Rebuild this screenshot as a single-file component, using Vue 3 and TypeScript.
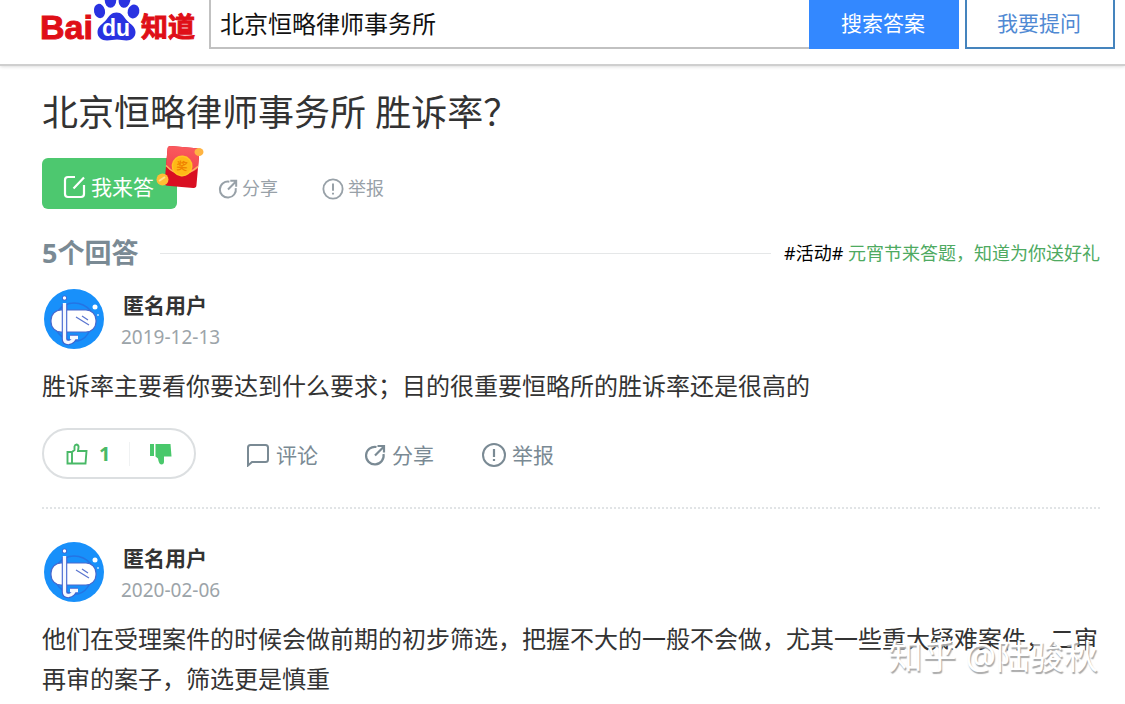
<script setup lang="ts">
import { ref } from 'vue'

interface Answer {
  id: number
  user: string
  date: string
  text: string
  likes?: number
}

const query = ref('北京恒略律师事务所')

const answers: Answer[] = [
  {
    id: 1,
    user: '匿名用户',
    date: '2019-12-13',
    text: '胜诉率主要看你要达到什么要求；目的很重要恒略所的胜诉率还是很高的',
    likes: 1,
  },
  {
    id: 2,
    user: '匿名用户',
    date: '2020-02-06',
    text: '他们在受理案件的时候会做前期的初步筛选，把握不大的一般不会做，尤其一些重大疑难案件，二审再审的案子，筛选更是慎重',
  },
]
</script>

<template>
  <div class="page">
    <header class="top">
      <a class="logo" href="#" aria-label="Baidu知道">
        <span class="logo-bai">Bai</span>
        <svg class="paw" viewBox="0 0 48 48" width="48" height="48" aria-hidden="true">
          <g fill="#2932e1">
            <ellipse cx="6.500" cy="11" rx="5.500" ry="7.200" transform="rotate(-12 6.500 11)" />
            <ellipse cx="17.500" cy="0" rx="5.800" ry="7.800" />
            <ellipse cx="31.500" cy="0" rx="5.800" ry="7.800" transform="rotate(10 31.500 0)" />
            <ellipse cx="40.500" cy="11.500" rx="5.800" ry="7" transform="rotate(15 40.500 11.500)" />
            <path d="M23.500 12.500c5 0 7 3.500 9.500 7s9.500 6.500 9.500 12.500c0 5.500-4 8.500-9 8.500-3.500 0-6-1-9.500-1s-6.500 1-10 1c-5.500 0-9.500-3-9.500-8.500 0-6 6-8.500 9-12.500 2.500-3.500 5-7 10-7z" />
          </g>
          <text x="23" y="36" text-anchor="middle" class="paw-text">du</text>
        </svg>
        <span class="logo-zhidao">知道</span>
      </a>
      <form class="search" @submit.prevent>
        <input v-model="query" class="search-input" type="text" aria-label="搜索" />
        <button class="search-button" type="submit">搜索答案</button>
        <button class="ask-button" type="button">我要提问</button>
      </form>
    </header>

    <main class="content">
      <h1 class="title">北京恒略律师事务所 胜诉率？</h1>

      <div class="question-actions">
        <button class="answer-button" type="button">
          <svg class="icon" viewBox="0 0 24 24" width="24" height="24" aria-hidden="true">
            <path d="M12 2H5a3 3 0 0 0-3 3v14a3 3 0 0 0 3 3h13a3 3 0 0 0 3-3v-9M10.500 13.500L21 2.500" stroke-width="2.200" />
          </svg>
          <span>我来答</span>
          <svg class="packet" viewBox="0 0 50 48" width="50" height="48" aria-hidden="true">
            <defs>
              <linearGradient id="flap" x1="0" y1="0" x2="0" y2="1">
                <stop offset="0" stop-color="#fa5a5e" />
                <stop offset="1" stop-color="#f2434b" />
              </linearGradient>
            </defs>
            <g transform="rotate(5 27 24)">
              <rect x="11" y="4" width="32" height="40" rx="3" fill="#d90f22" />
              <path d="M11 24V7a3 3 0 0 1 3-3h26a3 3 0 0 1 3 3v17Q27 38 11 24z" fill="url(#flap)" />
              <path d="M11 24Q27 39 43 22" fill="none" stroke="#ffae5e" stroke-width="1.500" />
              <circle cx="27" cy="23" r="10.500" fill="#ffc423" />
              <circle cx="27" cy="23" r="9" fill="#ffb817" />
              <text x="27" y="27" text-anchor="middle" class="packet-text">奖</text>
            </g>
            <circle cx="7.500" cy="36.500" r="6" fill="#ffbd35" />
            <path d="M4 38l6-4" stroke="#ffe08a" stroke-width="2" />
            <ellipse cx="44" cy="9" rx="4.500" ry="4" fill="#ffb442" />
          </svg>
        </button>
        <button class="link-button share" type="button">
          <svg class="icon" viewBox="0 0 22 22" width="20" height="20" aria-hidden="true">
            <path d="M12.500 3A8.800 8.800 0 1 0 19.500 10M11 11.500L20 2.500M13.500 2H20V8.500" stroke-width="2.200" />
          </svg>
          <span>分享</span>
        </button>
        <button class="link-button" type="button">
          <svg class="icon" viewBox="0 0 24 24" width="22" height="22" aria-hidden="true">
            <circle cx="12" cy="12" r="10.500" stroke-width="2" />
            <path d="M12 6v8M12 16v2" stroke-width="2.200" />
          </svg>
          <span>举报</span>
        </button>
      </div>

      <div class="summary">
        <h2 class="count">5个回答</h2>
        <span class="rule"></span>
        <p class="activity">#活动# <a href="#">元宵节来答题，知道为你送好礼</a></p>
      </div>

      <article v-for="answer in answers" :key="answer.id" class="answer">
        <div class="author">
          <svg class="avatar" viewBox="0 0 60 60" width="60" height="60" aria-hidden="true">
            <circle cx="30" cy="30" r="30" fill="#1890fa" />
            <path d="M14 22Q20 14 30 14t17 8M12 40q4 10 17 12h5q8-2 12-11" fill="none" stroke="#2474e4" stroke-width="1.500" />
            <rect x="7" y="21" width="45" height="22" rx="10" fill="#fff" stroke="#4a68cc" stroke-width="1.200" />
            <path d="M32 28l13 8M38 27l6 4" stroke="#5b76d0" stroke-width="1.300" />
            <path d="M20.500 15v35q0 3.500 4 3.500 5-1 6-5.500M26 48.500h8" fill="none" stroke="#3f62cf" stroke-width="5.500" />
            <path d="M20.500 14v36q0 3.500 4 3.500 5-1 6-5.500M26 48.500h8" fill="none" stroke="#f4f8ff" stroke-width="3.300" />
            <circle cx="20.500" cy="9" r="2.500" fill="#3f62cf" />
            <circle cx="20.500" cy="9" r="1.700" fill="#fff" />
            <circle cx="51" cy="18" r="2.500" fill="#fff" />
            <circle cx="54" cy="26" r="1" fill="#c4e1ff" />
          </svg>
          <div class="author-text">
            <h3 class="name">{{ answer.user }}</h3>
            <time class="date" :datetime="answer.date">{{ answer.date }}</time>
          </div>
        </div>
        <p class="text">{{ answer.text }}</p>
        <div v-if="answer.likes" class="answer-actions">
          <div class="votes">
            <button class="vote up" type="button" aria-label="赞同">
              <svg class="icon" viewBox="0 0 22 22" width="22" height="22" aria-hidden="true">
                <path d="M1.500 9h4.500v11.500H1.500zM6 9l2.500-2V3.500Q9 1.500 10.500 1.500q2.500.5 2 3L12 8h8.500l-1 12.500H6z" stroke-width="1.900" />
              </svg>
              <span>{{ answer.likes }}</span>
            </button>
            <button class="vote down" type="button" aria-label="反对">
              <svg viewBox="0 0 22 22" width="22" height="22" fill="#49c86b" aria-hidden="true">
                <path d="M0 1h4v12H0zM5.500 1H20.500l1 12.500H14v5q0 3-2.500 3-2 0-3-3.500l-.5-2.500-2.500-2z" />
              </svg>
            </button>
          </div>
          <button class="link-button large comment" type="button">
            <svg class="icon" viewBox="0 0 24 24" width="24" height="24" aria-hidden="true">
              <path d="M2 22.500V4.500a2.500 2.500 0 0 1 2.500-2.500h15a2.500 2.500 0 0 1 2.500 2.500v12a2.500 2.500 0 0 1-2.500 2.500H6z" stroke-width="2" />
            </svg>
            <span>评论</span>
          </button>
          <button class="link-button large share-answer" type="button">
            <svg class="icon" viewBox="0 0 22 22" width="22" height="22" aria-hidden="true">
              <path d="M12.500 3A8.800 8.800 0 1 0 19.500 10M11 11.500L20 2.500M13.500 2H20V8.500" stroke-width="2.200" />
            </svg>
            <span>分享</span>
          </button>
          <button class="link-button large" type="button">
            <svg class="icon" viewBox="0 0 24 24" width="24" height="24" aria-hidden="true">
              <circle cx="12" cy="12" r="11" stroke-width="2" />
              <path d="M12 6v8M12 16v2" stroke-width="2.200" />
            </svg>
            <span>举报</span>
          </button>
        </div>
      </article>
    </main>
    <div class="watermark">知乎 @陆骏秋</div>
  </div>
</template>

<style>
body {
  background: #fff;
}
</style>

<style scoped>
.page {
  position: relative;
  overflow: hidden;
  font-family: "Noto Sans", "Noto Sans CJK SC", sans-serif;
  color: #333;
}

.page * {
  box-sizing: border-box;
}

button,
input {
  font-family: inherit;
  margin: 0;
}

button {
  cursor: pointer;
}

.icon {
  flex: none;
  fill: none;
  stroke: currentColor;
}

.top {
  display: flex;
  align-items: flex-start;
  height: 66px;
  padding: 0 10px 0 40px;
  border-bottom: 2px solid #cfcfcf;
  box-shadow: 0 0 4px #ccc;
}

.logo {
  display: flex;
  flex: none;
  width: 169px;
  height: 49px;
  color: #df0f17;
  font-weight: 700;
  text-decoration: none;
}

.logo-bai {
  width: 53px;
  font-family: "Liberation Sans", sans-serif;
  font-size: 34px;
  line-height: 54px;
  -webkit-text-stroke: 1px #df0f17;
}

.paw {
  flex: none;
  overflow: visible;
}

.paw-text {
  fill: #fff;
  font-family: "Liberation Sans", sans-serif;
  font-size: 23px;
  font-weight: 700;
}

.logo-zhidao {
  font-size: 27px;
  line-height: 54px;
  white-space: nowrap;
  -webkit-text-stroke: 1px #df0f17;
}

.search {
  display: flex;
  flex: 1;
  min-width: 0;
  height: 49px;
}

.search-input {
  flex: 1;
  min-width: 0;
  padding: 0 9px 2px;
  border: 2px solid #c1c1c1;
  border-width: 0 0 2px 2px;
  border-radius: 0;
  outline: none;
  background: #fff;
  color: #111;
  font-size: 24px;
}

.search-button,
.ask-button {
  flex: none;
  width: 150px;
  padding: 0 2px 6px 0;
  border: 0;
  font-size: 21px;
}

.search-button {
  background: #3388ff;
  color: #fff;
}

.ask-button {
  margin-left: 6px;
  padding: 0 2px 4px 0;
  border: 2px solid #4584bd;
  border-top: 0;
  background: #fff;
  color: #5089d3;
}

.content {
  padding: 20px 25px 4px 42px;
}

.title {
  margin: 0;
  font-size: 36px;
  font-weight: 400;
  line-height: 54px;
}

.question-actions {
  display: flex;
  align-items: center;
  height: 51px;
  margin-top: 18px;
  color: #98a1a8;
}

.answer-button {
  position: relative;
  display: flex;
  align-items: center;
  gap: 4px;
  width: 135px;
  height: 51px;
  padding: 7px 0 0 21px;
  border: 0;
  border-radius: 6px;
  background: #4dc86f;
  color: #fff;
  font-size: 21px;
  line-height: 30px;
}

.packet {
  position: absolute;
  top: -15px;
  right: -28px;
}

.packet-text {
  fill: #f08300;
  font-size: 11px;
  font-weight: 700;
}

.link-button {
  display: flex;
  align-items: center;
  gap: 4px;
  padding: 0;
  border: 0;
  background: none;
  color: inherit;
  font-size: 18px;
  line-height: 27px;
}

.question-actions .link-button {
  padding-top: 10px;
}

.share {
  margin: 0 44px 0 41px;
}

.summary {
  display: flex;
  align-items: center;
  height: 42px;
  margin-top: 23px;
}

.count {
  margin: 0;
  color: #7a8a94;
  font-size: 27px;
  line-height: 42px;
}

.rule {
  flex: 1;
  height: 1px;
  margin: 0 13px 0 22px;
  background: #e5e7e8;
}

.activity {
  margin: 0;
  color: #000;
  font-size: 18px;
  line-height: 27px;
}

.activity a {
  color: #4eaa61;
  text-decoration: none;
}

.answer {
  padding: 31px 0 0;
}

.answer:first-of-type {
  padding: 13px 0 28px;
  border-bottom: 2px dotted #e1e4e6;
}

.author {
  display: flex;
  gap: 17px;
  padding-left: 2px;
}

.avatar {
  flex: none;
  margin-top: 2px;
}

.name {
  margin: 0;
  padding-left: 2px;
  font-size: 21px;
  line-height: 37px;
}

.date {
  display: block;
  color: #9ca4a9;
  font-size: 19px;
  line-height: 27px;
}

.text {
  margin: 15px 0 0;
  font-size: 24px;
  line-height: 40px;
}

.answer-actions {
  display: flex;
  align-items: center;
  margin-top: 22px;
  color: #7a8a94;
}

.votes {
  display: flex;
  align-items: center;
  width: 154px;
  height: 51px;
  border: 2px solid #dcdfe1;
  border-radius: 26px;
}

.vote {
  display: flex;
  align-items: center;
  height: 24px;
  padding: 0;
  border: 0;
  background: none;
  color: #49b967;
  font-size: 20px;
  font-weight: 700;
}

.up {
  gap: 11px;
  width: 86px;
  padding-left: 22px;
  border-right: 1px solid #f0f2f3;
}

.down {
  padding-left: 20px;
}

.large {
  gap: 6px;
  padding-top: 2px;
  font-size: 21px;
  line-height: 32px;
}

.comment {
  margin: 0 46px 0 50px;
}

.share-answer {
  margin-right: 48px;
}

.watermark {
  position: absolute;
  right: 27px;
  bottom: 22px;
  color: #fff;
  font-size: 34px;
  line-height: 50px;
  text-shadow: 1px 2px 1px #aaa;
  pointer-events: none;
}
</style>
